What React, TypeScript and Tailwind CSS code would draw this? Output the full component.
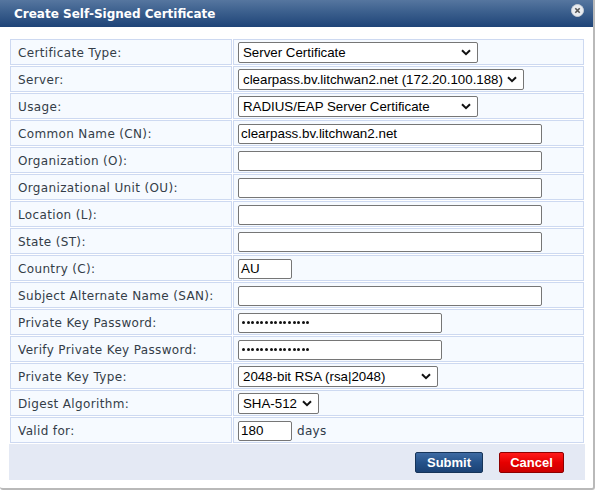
import React from "react";

const labelFont = { fontFamily: '"DejaVu Sans", Verdana, sans-serif' };
const fieldFont = { fontFamily: '"Liberation Sans", Arial, sans-serif' };

function Chevron() {
  return (
    <svg width="10" height="7" viewBox="0 0 10 7" className="shrink-0">
      <path d="M1 1.2 L5 5.2 L9 1.2" fill="none" stroke="#111" strokeWidth="2" />
    </svg>
  );
}

function Select({ value, width }: { value: string; width: string }) {
  return (
    <div
      className={`flex h-[21px] items-center justify-between gap-[3px] rounded-[2px] border border-[#767676] bg-white pl-[4px] pr-[6px] text-[13.3px] text-black ${width}`}
      style={fieldFont}
    >
      <span className="whitespace-nowrap leading-none">{value}</span>
      <Chevron />
    </div>
  );
}

function TextInput({ value, width }: { value?: string; width: string }) {
  return (
    <div
      className={`flex h-[20px] items-center rounded-[2px] border border-[#767676] bg-white pl-[2px] text-[13.4px] text-black ${width}`}
      style={fieldFont}
    >
      <span className="whitespace-nowrap leading-none">{value ?? ""}</span>
    </div>
  );
}

function Password({ width }: { width: string }) {
  return (
    <div
      className={`flex h-[20px] items-center gap-[1.6px] rounded-[2px] border border-[#767676] bg-white pl-[3px] ${width}`}
    >
      {Array.from({ length: 15 }).map((_, i) => (
        <span key={i} className="h-[3px] w-[3px] rounded-full bg-[#111]" />
      ))}
    </div>
  );
}

type Row = { label: string; field: React.ReactNode };

const rows: Row[] = [
  { label: "Certificate Type:", field: <Select value="Server Certificate" width="w-[240px]" /> },
  { label: "Server:", field: <Select value="clearpass.bv.litchwan2.net (172.20.100.188)" width="w-[286px]" /> },
  { label: "Usage:", field: <Select value="RADIUS/EAP Server Certificate" width="w-[240px]" /> },
  { label: "Common Name (CN):", field: <TextInput value="clearpass.bv.litchwan2.net" width="w-[304px]" /> },
  { label: "Organization (O):", field: <TextInput width="w-[304px]" /> },
  { label: "Organizational Unit (OU):", field: <TextInput width="w-[304px]" /> },
  { label: "Location (L):", field: <TextInput width="w-[304px]" /> },
  { label: "State (ST):", field: <TextInput width="w-[304px]" /> },
  { label: "Country (C):", field: <TextInput value="AU" width="w-[54px]" /> },
  { label: "Subject Alternate Name (SAN):", field: <TextInput width="w-[304px]" /> },
  { label: "Private Key Password:", field: <Password width="w-[204px]" /> },
  { label: "Verify Private Key Password:", field: <Password width="w-[204px]" /> },
  { label: "Private Key Type:", field: <Select value="2048-bit RSA (rsa|2048)" width="w-[200px]" /> },
  { label: "Digest Algorithm:", field: <Select value="SHA-512" width="w-[81px]" /> },
  {
    label: "Valid for:",
    field: (
      <div className="flex items-center gap-[5px]">
        <TextInput value="180" width="w-[54px]" />
        <span className="pt-[1px] text-[12px] tracking-[0.3px] text-[#2f3a4a]" style={labelFont}>
          days
        </span>
      </div>
    ),
  },
];

export default function App() {
  return (
    <div className="h-[491px] w-[596px] overflow-hidden bg-white">
      <div className="relative h-[490px] w-[595px] rounded-b-[3px] border-b-2 border-r-2 border-[#b9b9b9] bg-white">
        {/* title bar */}
        <div className="flex h-[27px] items-center justify-between bg-[linear-gradient(#56769f,#3b5f8d_45%,#1f4478)] pl-[14px] pr-[9px]">
          <span className="pt-[1px] text-[12px] font-bold text-white" style={labelFont}>
            Create Self-Signed Certificate
          </span>
          <svg width="13" height="13" viewBox="0 0 13 13" className="-mt-[6px]">
            <circle cx="6.5" cy="6.5" r="6" fill="#e9ecf0" stroke="#c8ced6" />
            <path d="M4.3 4.3 L8.7 8.7 M8.7 4.3 L4.3 8.7" stroke="#555" strokeWidth="1.6" />
          </svg>
        </div>

        {/* form grid */}
        <div className="ml-[9px] mt-[11px] w-[576px]">
          <div className="grid grid-cols-[222px_351px] gap-[1px] bg-white p-[1px]">
            {rows.map((r) => (
              <React.Fragment key={r.label}>
                <div
                  className="flex h-[26px] items-center border border-[#cdd9f1] bg-[#f6faff] pl-[7px] pt-[2px] text-[12px] tracking-[0.35px] text-[#343d48]"
                  style={labelFont}
                >
                  {r.label}
                </div>
                <div className="flex h-[26px] items-center border border-[#cdd9f1] bg-[#f6faff] pl-[4px] pt-[1px]">
                  {r.field}
                </div>
              </React.Fragment>
            ))}
          </div>

          {/* actions */}
          <div className="flex h-[36px] items-center justify-end gap-[16px] bg-[#e4e9f4] pr-[21px]">
            <button
              className="h-[21px] w-[68px] rounded-[2px] border border-[#163459] bg-[linear-gradient(#3e6aa3,#25528a_50%,#1b4275)] text-[13px] font-bold text-white"
              style={fieldFont}
            >
              Submit
            </button>
            <button
              className="h-[21px] w-[65px] rounded-[2px] border border-[#8e0000] bg-[linear-gradient(#ff1a1a,#e60000_50%,#cc0000)] text-[13px] font-bold text-white"
              style={fieldFont}
            >
              Cancel
            </button>
          </div>
        </div>
      </div>
    </div>
  );
}
